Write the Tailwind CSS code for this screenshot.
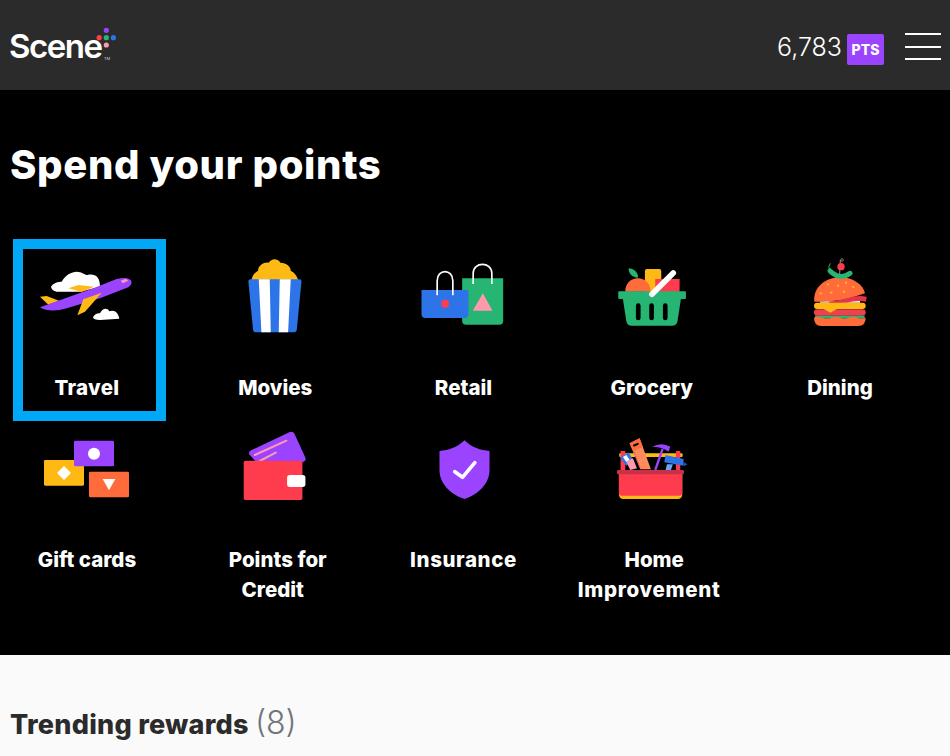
<!DOCTYPE html>
<html lang="en">
<head>
    <meta charset="UTF-8">
    <title>Scene</title>
    <script src="https://cdn.jsdelivr.net/npm/@tailwindcss/browser@4"></script>
</head>
<body class="bg-black font-['Inter',sans-serif]">
    <div class="h-[756px] overflow-hidden">
        <!-- Header -->
        <header class="h-[90px] bg-[#2b2b2b] flex items-center justify-between pl-[9px] pr-[9px] text-white">
            <a class="relative block text-[33px] leading-none font-semibold tracking-[-1.5px] mt-[3px]">
                Scene
                <svg class="absolute left-[79px] top-[-8px]" width="30" height="30" viewBox="88 21 30 30">
                    <circle cx="106.3" cy="29.3" r="2.6" fill="#9a44ff"/>
                    <circle cx="99.2" cy="36.7" r="2.6" fill="#ff3b4e"/>
                    <circle cx="106.3" cy="36.7" r="2.6" fill="#27b573"/>
                    <circle cx="113.4" cy="36.7" r="2.6" fill="#2d74e8"/>
                    <circle cx="106.3" cy="44" r="2.6" fill="#ff9aae"/>
                </svg>
                <span class="absolute left-[95px] top-[27px] text-[4px] leading-none font-normal tracking-normal text-gray-300">TM</span>
            </a>
            <div class="flex items-center">
                <span class="text-[25px] font-light leading-[26px] mr-[5px] mt-[4px]">6,783</span>
                <span class="w-[37px] h-[31px] mt-[9px] bg-[#9a44ff] rounded-[2px] flex items-center justify-center text-[14px] font-extrabold">PTS</span>
                <button class="w-[36px] ml-[21px] mt-[3px] flex flex-col gap-[10.5px]">
                    <span class="block h-[2px] bg-white"></span>
                    <span class="block h-[2px] bg-white"></span>
                    <span class="block h-[2px] bg-white"></span>
                </button>
            </div>
        </header>

        <!-- Spend your points -->
        <section class="h-[565px] bg-black text-white">
            <h1 class="pl-[10px] pt-[50px] text-[40px] leading-[50px] font-extrabold tracking-[0.65px]">Spend your points</h1>
            <div class="mt-[59px] ml-[23px] grid grid-cols-[repeat(5,133px)] gap-x-[55.25px] gap-y-[10px] text-[20.5px] leading-[30px] font-extrabold text-center">
                <a class="h-[162px] pr-[5px] outline-[10px] outline-solid outline-[#00a8f5]">
                    <svg class="mx-auto mb-[24px]" width="100" height="100" viewBox="111 57 300 300">
                        <path d="M153 170C160 158 175 155 185 155C195 135 215 125 230 125C245 125 255 135 262 135C285 130 300 140 300 170L240 185H170Q155 182 153 170Z" fill="#fff"/>
                        <path d="M279 262C285 250 295 250 300 250C305 238 320 230 328 244C345 238 355 250 358 266L300 270Q280 270 279 262Z" fill="#fff"/>
                        <path d="M205 175L235 165L282 170L245 186Z" fill="#ffb914"/>
                        <path d="M120 200L140 198L177 212L145 224Z" fill="#ffb914"/>
                        <path d="M120 232L280 175L350 147Q380 140 392 150Q400 160 385 172L300 205L200 235Q150 250 120 232Z" fill="#9a44ff"/>
                        <path d="M250 208L305 188L255 245L232 256Z" fill="#ffb914"/>
                        <path d="M362 152L378 146L385 152L368 160Z" fill="#ff9aae"/>
                    </svg>
                    <span class="tracking-[0.3px]">Travel</span>
                </a>
                <a class="h-[162px] pr-[5px]">
                    <svg class="mx-auto mb-[24px]" width="100" height="100" viewBox="-14.25 -3 300 300">
                        <path d="M65 90C70 70 80 65 85 62C85 45 105 35 117 38C125 24 145 24 152 38C170 38 183 50 183 62C195 68 202 78 205 90Z" fill="#ffb914"/>
                        <path d="M62 88H209Q216 88 215 96L201 240Q200 247 193 247H78Q71 247 70 240L56 96Q55 88 62 88Z" fill="#2d74e8"/>
                        <path d="M87 88H120L123 247H95ZM150 88H183L175 247H147Z" fill="#fff"/>
                    </svg>
                    Movies
                </a>
                <a class="h-[162px] pr-[5px]">
                    <svg class="mx-auto mb-[24px]" width="100" height="100" viewBox="550.5 -3 300 300">
                        <path d="M695 85H818V212Q818 224 806 224H707Q695 224 695 212Z" fill="#27b573"/>
                        <path d="M728 102V70C728 34 784 34 784 70V102" fill="none" stroke="#fff" stroke-width="5"/>
                        <path d="M757 130L786 182H727Z" fill="#ff9aae"/>
                        <path d="M573 120H714V192Q714 204 702 204H585Q573 204 573 192Z" fill="#2d74e8"/>
                        <path d="M620 136V92C620 56 667 56 667 92V136" fill="none" stroke="#fff" stroke-width="5"/>
                        <circle cx="644" cy="161" r="12" fill="#ff3b4e"/>
                    </svg>
                    Retail
                </a>
                <a class="h-[162px] pr-[5px]">
                    <svg class="mx-auto mb-[24px]" width="100" height="100" viewBox="5.25 -3 300 300">
                        <rect x="134" y="57" width="49" height="70" rx="6" fill="#ffb914"/>
                        <rect x="165" y="87" width="73" height="40" fill="#ff3b4e"/>
                        <path d="M75 125C75 100 92 85 113 85C134 85 151 100 151 125Z" fill="#ff6b3a"/>
                        <path d="M85 55C100 55 115 68 113 83C95 83 85 70 85 55Z" fill="#27b573"/>
                        <rect x="54" y="124" width="203" height="23" rx="3" fill="#27b573"/>
                        <path d="M68 147H242L232 212Q230 227 215 227H95Q80 227 78 212Z" fill="#27b573"/>
                        <rect x="107" y="160" width="14" height="51" rx="7"/>
                        <rect x="147" y="160" width="14" height="51" rx="7"/>
                        <rect x="188" y="160" width="14" height="51" rx="7"/>
                        <path d="M155 133L219 69" stroke="#fff" stroke-width="17" stroke-linecap="round"/>
                    </svg>
                    Grocery
                </a>
                <a class="h-[162px] pr-[5px]">
                    <svg class="mx-auto mb-[24px]" width="100" height="100" viewBox="570 -3 300 300">
                        <path d="M721 30L719 72" stroke="#ddd" stroke-width="2"/>
                        <circle cx="726" cy="30" r="4" fill="none" stroke="#aaa" stroke-width="2"/>
                        <path d="M643 155C638 110 680 82 720 82C760 82 790 105 795 130L740 148L680 155Z" fill="#ff6b3a"/>
                        <path d="M691 40Q684 48 688 60" fill="none" stroke="#27b573" stroke-width="3"/>
                        <path d="M690 63Q720 92 750 70" fill="none" stroke="#27b573" stroke-width="15" stroke-linecap="round"/>
                        <circle cx="723" cy="50" r="11" fill="#ff3b4e"/>
                        <g fill="#ffb914">
                            <circle cx="684" cy="103" r="3.5"/><circle cx="714" cy="107" r="3.5"/><circle cx="738" cy="98" r="3.5"/>
                            <circle cx="760" cy="111" r="3.5"/><circle cx="732" cy="125" r="3.5"/><circle cx="694" cy="128" r="3.5"/><circle cx="662" cy="130" r="3.5"/>
                        </g>
                        <path d="M660 155L730 152L780 150V158H660Z" fill="#fff"/>
                        <path d="M685 155Q720 152 740 145Q770 135 800 140L798 155Q770 150 740 158L690 160Z" fill="#e5344a"/>
                        <rect x="642" y="158" width="155" height="19" rx="9" fill="#ffb914"/>
                        <rect x="642" y="178" width="155" height="19" rx="9.5" fill="#f0404f"/>
                        <path d="M670 176H712L691 188Z" fill="#ffb914"/>
                        <rect x="645" y="197" width="149" height="9" fill="#27b573"/>
                        <path d="M642 203Q655 198 668 203T694 203T720 203T746 203T772 203T797 203Q797 228 775 228H664Q642 228 642 203Z" fill="#ff6b3a"/>
                    </svg>
                    Dining
                </a>
                <a class="h-[162px] pr-[5px]">
                    <svg class="mx-auto mb-[24px]" width="100" height="100" viewBox="21 -12 300 300">
                        <rect x="42" y="105" width="120" height="77" rx="4" fill="#ffb914"/>
                        <path d="M102 123L123 144L102 165L81 144Z" fill="#fff"/>
                        <rect x="132" y="47" width="120" height="77" rx="4" fill="#9a44ff"/>
                        <circle cx="192" cy="86" r="18" fill="#fff"/>
                        <rect x="177" y="140" width="120" height="77" rx="4" fill="#ff6b3a"/>
                        <path d="M218 162H256L237 196Z" fill="#fff"/>
                    </svg>
                    Gift cards
                </a>
                <a class="h-[162px] pr-[5px]">
                    <svg class="mx-auto mb-[24px]" width="100" height="100" viewBox="585.75 -12 300 300">
                        <path d="M664 76L780 21Q790 18 794 26L827 98Q830 106 822 110L700 130Q690 125 686 118L658 88Q656 80 664 76Z" fill="#9a44ff"/>
                        <path d="M675 90L770 47M690 108L738 83" stroke="#ff9aae" stroke-width="6" stroke-linecap="round"/>
                        <rect x="642" y="107" width="176" height="118" rx="5" fill="#ff3b4e"/>
                        <rect x="772" y="150" width="55" height="36" rx="8" fill="#fff"/>
                    </svg>
                    <span class="block pl-[5px]">Points for</span>
                    <span class="block pr-[5px]">Credit</span>
                </a>
                <a class="h-[162px] pr-[5px]">
                    <svg class="mx-auto mb-[24px]" width="100" height="100" viewBox="-19.5 -12 300 300">
                        <path d="M132 46C155 68 180 76 207 78V135C207 175 175 208 132 222C89 208 57 175 57 135V78C84 76 109 68 132 46Z" fill="#9a44ff"/>
                        <path d="M103 140L126 157L163 113" fill="none" stroke="#fff" stroke-width="11" stroke-linecap="round" stroke-linejoin="round"/>
                    </svg>
                    <span class="tracking-[0.6px]">Insurance</span>
                </a>
                <a class="h-[162px] pr-[5px] whitespace-nowrap">
                    <svg class="mx-auto mb-[24px]" width="100" height="100" viewBox="545.25 -12 300 300">
                        <rect x="597" y="85" width="190" height="11" rx="3" fill="#ffb914"/>
                        <rect x="601" y="78" width="14" height="60" fill="#ff3b4e"/>
                        <rect x="767" y="78" width="13" height="60" fill="#ff3b4e"/>
                        <path d="M628 55L658 40L692 133H660Z" fill="#ff8a5c"/>
                        <path d="M628 55L658 40L668 66L640 78Z" fill="#ff6b3a"/>
                        <rect x="638" y="56" width="18" height="6" rx="3" transform="rotate(-24 647 59)"/>
                        <path d="M641 80L661 133" stroke="#c9304a" stroke-width="3" stroke-dasharray="3 4"/>
                        <path d="M600 98L625 82L640 107L618 122Z" fill="#2d74e8"/>
                        <path d="M618 110L638 100L650 130L630 135Z" fill="#ff9aae"/>
                        <path d="M608 96L618 90L628 104L618 110Z" fill="#fff"/>
                        <path d="M727 72L705 135" stroke="#9a44ff" stroke-width="7"/>
                        <path d="M695 65Q725 50 750 65L745 80Q725 65 695 65Z" fill="#9a44ff"/>
                        <path d="M740 118H758L752 135H736Z" fill="#6aa5f7"/>
                        <path d="M736 90L790 102V122L732 112Z" fill="#2d74e8"/>
                        <path d="M790 112L802 118L790 124Z" fill="#1e57b8"/>
                        <path d="M596 140H786V208Q786 222 772 222H610Q596 222 596 208Z" fill="#ffb914"/>
                        <path d="M596 140H786V204Q786 212 778 212H604Q596 212 596 204Z" fill="#ff3b4e"/>
                        <rect x="590" y="135" width="201" height="13" rx="3" fill="#c9304a"/>
                    </svg>
                    <span class="block pl-[5px]">Home</span>
                    <span class="block -ml-[10px] text-left tracking-[0.7px]">Improvement</span>
                </a>
            </div>
        </section>

        <!-- Trending rewards -->
        <section class="bg-[#fafafa] h-[101px] pt-[48px] pl-[10px] text-[#2b2b2b]">
            <h2 class="text-[27px] leading-[40px] font-extrabold tracking-[0.25px]">Trending rewards <span class="text-[#71757c] font-light text-[32px] tracking-normal">(8)</span></h2>
        </section>
    </div>
</body>
</html>
